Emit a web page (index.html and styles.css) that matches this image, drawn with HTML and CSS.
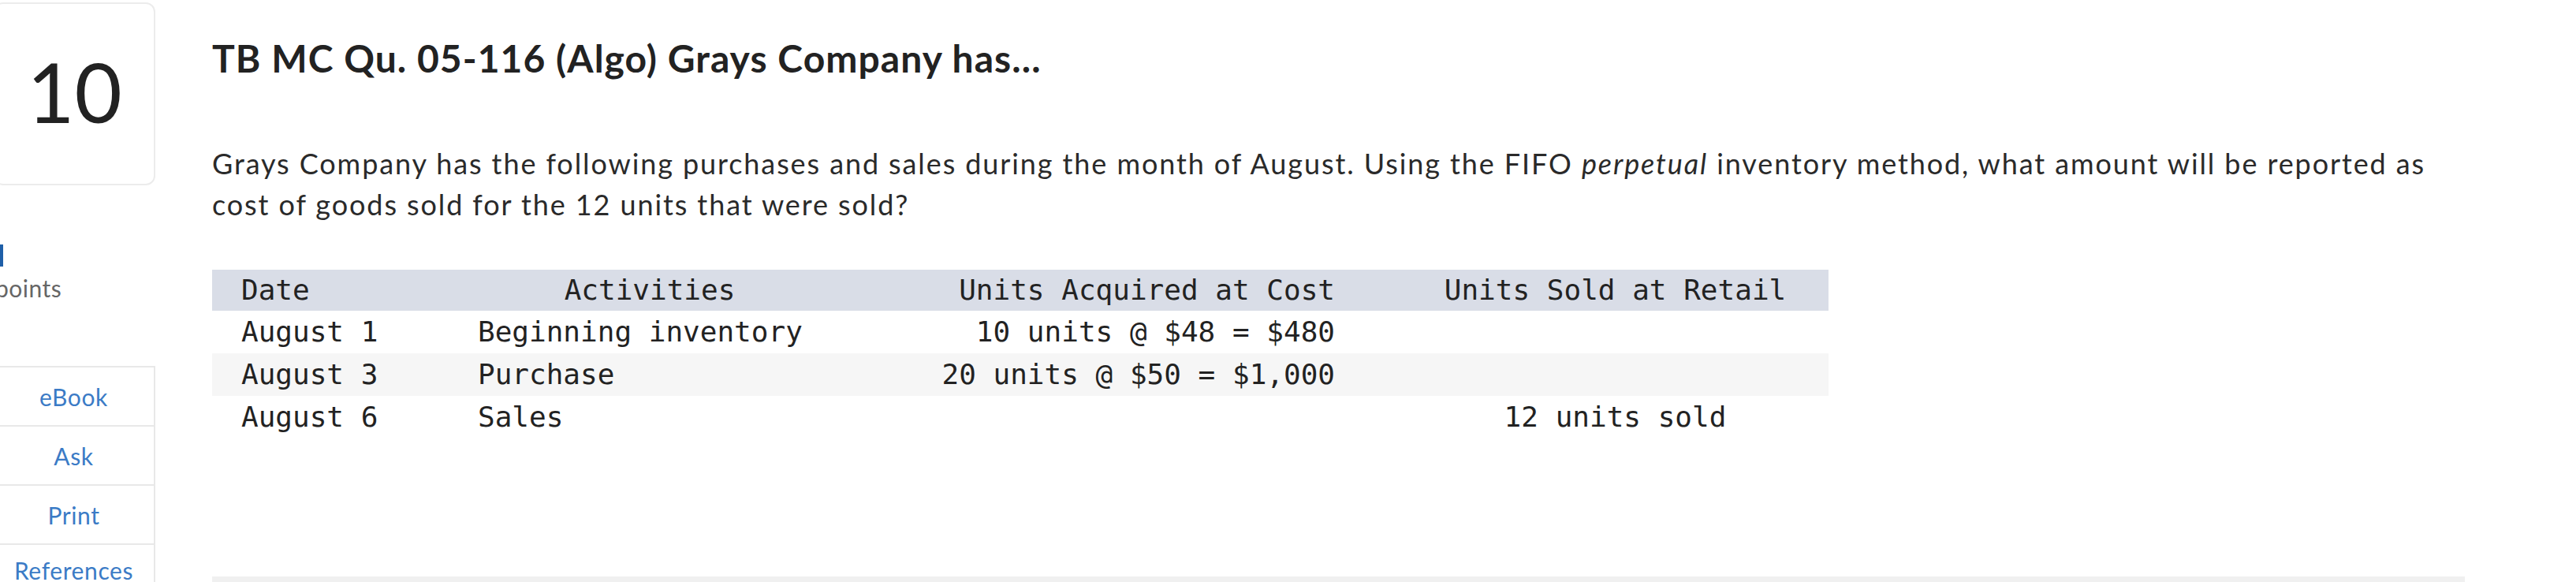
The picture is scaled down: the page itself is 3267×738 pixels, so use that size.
FILE: index.html
```html
<!DOCTYPE html>
<html lang="en">
<head>
    <meta charset="UTF-8">
    <title>TB MC Qu. 05-116 (Algo) Grays Company has...</title>
    <link rel="stylesheet" href="styles.css">
</head>
<body>
    <div class="page">
        <aside class="side">
            <div class="qnum">10</div>
            <div class="score">
                <span class="score-bar"></span>
                <span class="score-pts">points</span>
            </div>
            <ul class="tools">
                <li>eBook</li>
                <li>Ask</li>
                <li>Print</li>
                <li>References</li>
            </ul>
        </aside>

        <main class="question">
            <h1>TB MC Qu. 05-116 (Algo) Grays Company has...</h1>
            <p class="prompt">Grays Company has the following purchases and sales during the month of August. Using the FIFO <em>perpetual</em> inventory method, what amount will be reported as cost of goods sold for the 12 units that were sold?</p>

            <table class="data">
                <colgroup>
                    <col class="c-date">
                    <col class="c-act">
                    <col class="c-cost">
                    <col class="c-sold">
                </colgroup>
                <thead>
                    <tr>
                        <th class="date">Date</th>
                        <th class="act-head">Activities</th>
                        <th class="cost">Units Acquired at Cost</th>
                        <th class="sold">Units Sold at Retail</th>
                    </tr>
                </thead>
                <tbody>
                    <tr>
                        <td class="date">August 1</td>
                        <td class="act">Beginning inventory</td>
                        <td class="cost">10 units @ $48 = $480</td>
                        <td class="sold"></td>
                    </tr>
                    <tr class="alt">
                        <td class="date">August 3</td>
                        <td class="act">Purchase</td>
                        <td class="cost">20 units @ $50 = $1,000</td>
                        <td class="sold"></td>
                    </tr>
                    <tr>
                        <td class="date">August 6</td>
                        <td class="act">Sales</td>
                        <td class="cost"></td>
                        <td class="sold">12 units sold</td>
                    </tr>
                </tbody>
            </table>

            <div class="divider"></div>
        </main>
    </div>
</body>
</html>
```

FILE: styles.css
```css
body {
    margin: 0;
    font-family: Lato, "Open Sans", sans-serif;
    color: #222;
    background-color: #fff;
    overflow: hidden;
}
.page {
    display: flex;
    align-items: flex-start;
    height: 738px;
    overflow: hidden;
}
.side {
    width: 205px;
    margin-left: -8px;
    padding-top: 3px;
    flex-shrink: 0;
}
.qnum {
    height: 220px;
    padding-bottom: 8px;
    border: 2px solid #ececec;
    border-radius: 12px;
    display: flex;
    align-items: center;
    justify-content: center;
    font-size: 104px;
    color: #222;
}
.score {
    margin-top: 75px;
}
.score-bar {
    display: block;
    width: 4px;
    height: 28px;
    margin-left: 8px;
    background-color: #1f5fa8;
}
.score-pts {
    display: block;
    margin-top: 9px;
    margin-left: 2px;
    font-size: 30px;
    line-height: 36px;
    letter-spacing: 0.5px;
    color: #666;
}
.tools {
    list-style: none;
    margin: 81px 0 0;
    padding: 0;
    border-top: 2px solid #e8e8e8;
    border-right: 2px solid #e8e8e8;
}
.tools li {
    height: 73px;
    border-bottom: 2px solid #e8e8e8;
    display: flex;
    align-items: center;
    justify-content: center;
    font-size: 30px;
    letter-spacing: 0.6px;
    color: #3b7bc6;
}
.tools li:last-child {
    align-items: flex-start;
    padding-top: 14px;
}
.question {
    margin-left: 72px;
    width: 2857px;
    flex-shrink: 0;
}
h1 {
    margin: 45px 0 0;
    font-size: 48px;
    line-height: 1.2;
    font-weight: bold;
    letter-spacing: 1.05px;
    color: #222;
}
.prompt {
    margin: 78px 0 0;
    font-size: 36px;
    line-height: 52px;
    letter-spacing: 1.9px;
    color: #2a2a2a;
}
.data {
    margin-top: 57px;
    width: 2050px;
    border-collapse: collapse;
    table-layout: fixed;
    font-family: "DejaVu Sans Mono", "Liberation Mono", monospace;
    font-size: 36px;
    color: #222;
}
.c-date { width: 319px; }
.c-act { width: 472px; }
.c-cost { width: 658px; }
.c-sold { width: 601px; }
.data th {
    height: 52px;
    padding: 0;
    font-weight: normal;
    background-color: #d9dde7;
    white-space: nowrap;
}
.data td {
    height: 54px;
    padding: 0;
    white-space: nowrap;
}
.data .alt td {
    background-color: #f6f6f6;
}
.date {
    text-align: left;
    padding-left: 37px !important;
}
.act-head {
    text-align: center;
}
.act {
    text-align: left;
    padding-left: 18px !important;
}
.cost {
    text-align: right;
    padding-right: 25px !important;
}
.sold {
    text-align: center;
    padding-left: 60px !important;
}
.divider {
    margin-top: 175px;
    height: 20px;
    background-color: #f0f0f0;
}
```
